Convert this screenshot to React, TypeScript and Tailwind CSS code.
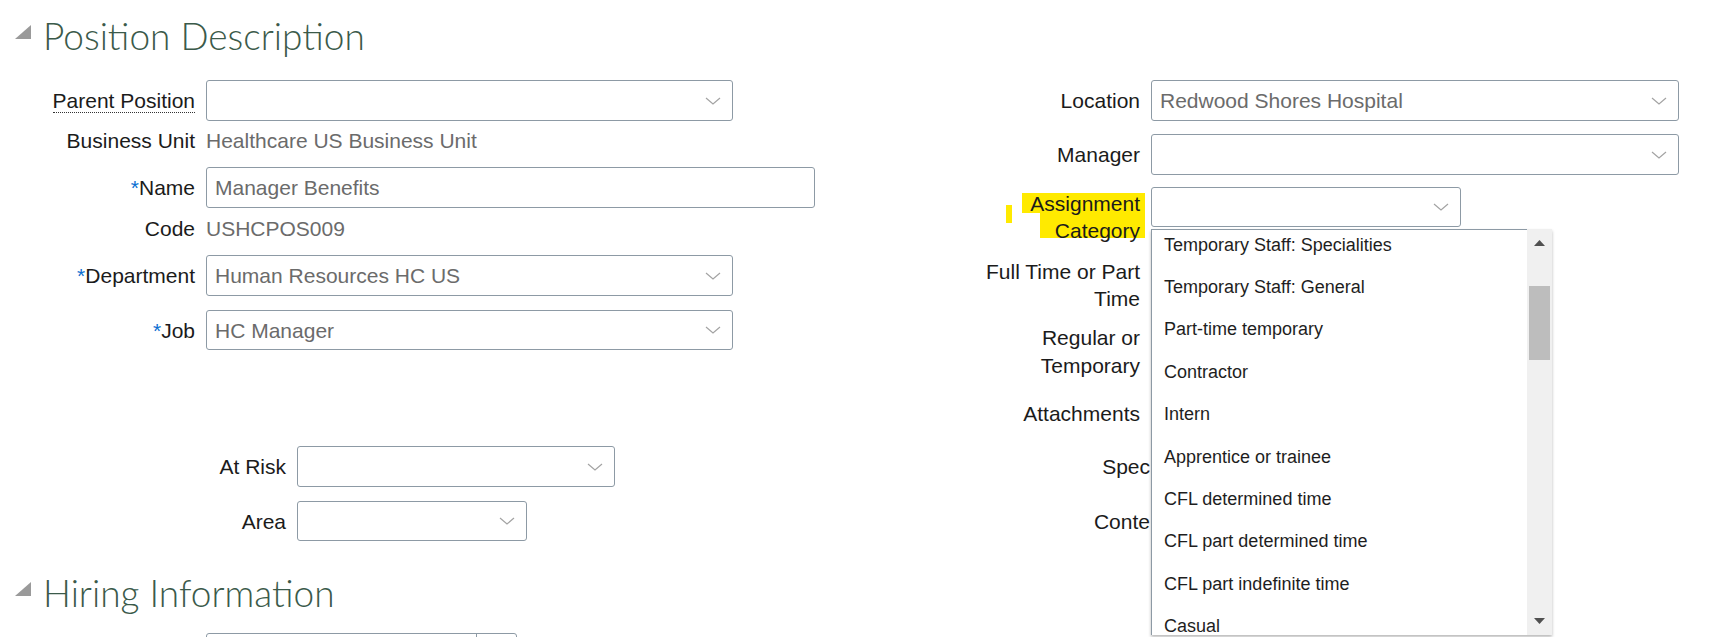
import type { ReactNode } from 'react';

const LABEL = 'text-[21px] leading-[27px] text-[#1b1b1b]';
const VALUE = 'text-[21px] leading-[27px] text-[#6b6b6b]';

const listItems = [
  'Temporary Staff: Specialities',
  'Temporary Staff: General',
  'Part-time temporary',
  'Contractor',
  'Intern',
  'Apprentice or trainee',
  'CFL determined time',
  'CFL part determined time',
  'CFL part indefinite time',
  'Casual',
];

function Chevron() {
  return (
    <svg width="16" height="8" viewBox="0 0 16 8" className="shrink-0">
      <polyline points="1,1 8,7 15,1" fill="none" stroke="#a3a3a3" strokeWidth="1.2" />
    </svg>
  );
}

function Select({ value, className }: { value?: string; className: string }) {
  return (
    <div
      className={`flex h-full items-center justify-between rounded-[3px] border border-[#8d9aa5] bg-white pl-[8px] pr-[11px] ${className}`}
    >
      <span className={VALUE}>{value}</span>
      <Chevron />
    </div>
  );
}

function Req() {
  return <span className="text-[#0a6ed1]">*</span>;
}

function Row({
  label,
  labelW,
  className,
  children,
}: {
  label: ReactNode;
  labelW: string;
  className: string;
  children?: ReactNode;
}) {
  return (
    <div className={`flex ${className}`}>
      <div className={`${labelW} shrink-0 text-right ${LABEL}`}>{label}</div>
      <div className="ml-[11px] flex h-full items-center">{children}</div>
    </div>
  );
}

function SectionTitle({ text, className }: { text: string; className: string }) {
  return (
    <div className={`flex h-[44px] items-start ${className}`}>
      <svg width="16" height="14" viewBox="0 0 16 14" className="ml-[15px] mt-[11px] shrink-0">
        <polygon points="16,0 16,14 0,14" fill="#9a9a9a" />
      </svg>
      <h2 className="ml-[12px] font-['Lato',sans-serif] text-[37px] font-light leading-[44px] text-[#3b5a4a]">
        {text}
      </h2>
    </div>
  );
}

function Dropdown() {
  return (
    <div className="absolute left-[1151px] top-[229px] flex h-[406px] w-[401px] bg-white shadow-[0_2px_3px_rgba(0,0,0,0.28)]">
      <div className="flex-1 overflow-hidden border-l border-t border-[#8d9aa5]">
        <ul className="-mt-[6px]">
          {listItems.map((item) => (
            <li key={item} className="flex h-[42.4px] items-center pl-[12px] text-[18px] text-[#1e1e1e]">
              {item}
            </li>
          ))}
        </ul>
      </div>
      <div className="flex w-[25px] flex-col bg-[#f0f0f0]">
        <div className="flex h-[28px] items-center justify-center">
          <svg width="11" height="6" viewBox="0 0 11 6">
            <polygon points="5.5,0 11,6 0,6" fill="#505050" />
          </svg>
        </div>
        <div className="h-[29px]" />
        <div className="mx-[2px] h-[74px] bg-[#bdbdbd]" />
        <div className="flex-1" />
        <div className="flex h-[28px] items-center justify-center">
          <svg width="11" height="6" viewBox="0 0 11 6">
            <polygon points="0,0 11,0 5.5,6" fill="#505050" />
          </svg>
        </div>
      </div>
    </div>
  );
}

export default function App() {
  return (
    <div className="relative h-[637px] w-[1711px] overflow-hidden bg-white font-['Liberation_Sans',Arial,sans-serif]">
      <SectionTitle text="Position Description" className="mt-[14px]" />

      <div className="mt-[22px] flex">
        {/* left column */}
        <div className="flex w-[880px] flex-col">
          <Row
            labelW="w-[195px]"
            className="h-[41px] items-center"
            label={<span className="border-b border-dotted border-[#333]">Parent Position</span>}
          >
            <Select className="w-[527px]" />
          </Row>
          <Row labelW="w-[195px]" className="mt-[3px] h-[32px] items-center" label="Business Unit">
            <span className={VALUE}>Healthcare US Business Unit</span>
          </Row>
          <Row
            labelW="w-[195px]"
            className="mt-[11px] h-[41px] items-center"
            label={
              <>
                <Req />
                Name
              </>
            }
          >
            <div className="flex h-full w-[609px] items-center rounded-[3px] border border-[#8d9aa5] bg-white pl-[8px]">
              <span className={VALUE}>Manager Benefits</span>
            </div>
          </Row>
          <Row labelW="w-[195px]" className="mt-[4px] h-[32px] items-center" label="Code">
            <span className={VALUE}>USHCPOS009</span>
          </Row>
          <Row
            labelW="w-[195px]"
            className="mt-[11px] h-[41px] items-center"
            label={
              <>
                <Req />
                Department
              </>
            }
          >
            <Select className="w-[527px]" value="Human Resources HC US" />
          </Row>
          <Row
            labelW="w-[195px]"
            className="mt-[14px] h-[40px] items-center"
            label={
              <>
                <Req />
                Job
              </>
            }
          >
            <Select className="w-[527px]" value="HC Manager" />
          </Row>
          <Row labelW="w-[286px]" className="mt-[96px] h-[41px] items-center" label="At Risk">
            <Select className="w-[318px]" />
          </Row>
          <Row labelW="w-[286px]" className="mt-[14px] h-[40px] items-center" label="Area">
            <Select className="w-[230px]" />
          </Row>
        </div>

        {/* right column */}
        <div className="flex flex-1 flex-col">
          <Row labelW="w-[260px]" className="h-[41px] items-center" label="Location">
            <Select className="w-[528px]" value="Redwood Shores Hospital" />
          </Row>
          <Row labelW="w-[260px]" className="mt-[13px] h-[41px] items-center" label="Manager">
            <Select className="w-[528px]" />
          </Row>
          <Row
            labelW="w-[260px]"
            className="mt-[12px] items-start"
            label={
              <div className="relative mt-[3px]">
                <div className="absolute left-[126px] top-[15px] h-[18px] w-[6px] bg-[#ffea00]" />
                <div className="absolute left-[142px] top-[3px] h-[20px] w-[123px] bg-[#ffea00]" />
                <div className="absolute left-[160px] top-[22px] h-[26px] w-[105px] bg-[#ffea00]" />
                <span className="relative block">Assignment</span>
                <span className="relative block">Category</span>
              </div>
            }
          >
            <div className="h-[40px] self-start">
              <Select className="w-[310px] bg-[#fbfcfd]" />
            </div>
          </Row>
          <Row
            labelW="w-[260px]"
            className="mt-[14px]"
            label={
              <>
                <span className="block">Full Time or Part</span>
                <span className="block">Time</span>
              </>
            }
          />
          <Row
            labelW="w-[260px]"
            className="mt-[12px]"
            label={
              <div className="leading-[28px]">
                <span className="block">Regular or</span>
                <span className="block">Temporary</span>
              </div>
            }
          />
          <Row labelW="w-[260px]" className="mt-[20px]" label="Attachments" />
          <Row labelW="w-[270px]" className="mt-[26px]" label="Spec" />
          <Row labelW="w-[270px]" className="mt-[28px]" label="Conte" />
        </div>
      </div>

      <SectionTitle text="Hiring Information" className="mt-[30px]" />

      <Row labelW="w-[195px]" className="mt-[18px] h-[41px]" label="">
        <div className="flex h-full w-[311px] rounded-[3px] border border-[#8d9aa5] bg-white">
          <div className="flex-1" />
          <div className="w-[40px] border-l border-[#8d9aa5]" />
        </div>
      </Row>

      <Dropdown />
    </div>
  );
}
